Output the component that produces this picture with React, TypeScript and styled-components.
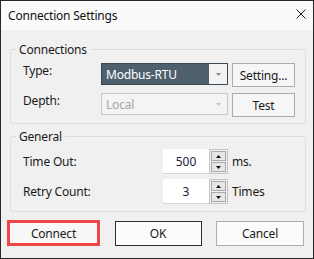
import React from 'react'
import styled, { createGlobalStyle } from 'styled-components'

const GlobalStyle = createGlobalStyle`
  * {
    box-sizing: border-box;
  }
  html, body {
    margin: 0;
    padding: 0;
    overflow: hidden;
    background: #f0f0f0;
  }
  body {
    font-family: 'Noto Sans', 'Segoe UI', sans-serif;
    font-size: 12px;
    color: #1a1a1a;
  }
`

const Window = styled.div`
  width: 314px;
  height: 259px;
  border: 1px solid #262626;
  background: #f0f0f0;
  display: flex;
  flex-direction: column;
`

const TitleBar = styled.div`
  flex: none;
  height: 29px;
  display: flex;
  align-items: center;
  justify-content: space-between;
  padding: 0 7px 0 7px;
  background: #fafafa;
`

const Title = styled.span`
  color: #111;
  letter-spacing: -0.2px;
`

const CloseIcon = styled.svg`
  width: 10px;
  height: 10px;
  margin-bottom: 3px;
`

const Content = styled.div`
  flex: 1;
  padding: 11px 7px 0 9px;
`

const Group = styled.fieldset<{ $pad: string }>`
  margin: 0;
  min-width: 0;
  padding: ${({ $pad }) => $pad};
  border: 1px solid #dcdcdc;
  border-radius: 3px;

  & + & {
    margin-top: 4px;
  }
`

const Legend = styled.legend`
  padding: 0 3px;
  margin-left: -7px;
  line-height: 17px;
  letter-spacing: -0.2px;
`

const ConnectionGrid = styled.div`
  display: grid;
  grid-template-columns: 74px 127px 63px;
  column-gap: 4px;
  row-gap: 6px;
  align-items: start;
`

const GeneralGrid = styled.div`
  display: grid;
  grid-template-columns: 140px auto 1fr;
  row-gap: 5px;
  align-items: center;
`

const Label = styled.span`
  line-height: 16px;
  letter-spacing: -0.2px;
`

const Combo = styled.div<{ $active?: boolean }>`
  height: 22px;
  display: flex;
  border: 1px solid ${({ $active }) => ($active ? '#3b4a55' : '#c9c9c9')};
  background: ${({ $active }) => ($active ? '#f3f3f3' : '#f4f4f4')};
`

const ComboText = styled.div<{ $active?: boolean }>`
  flex: 1;
  display: flex;
  align-items: center;
  padding-left: 4px;
  letter-spacing: -0.2px;
  color: ${({ $active }) => ($active ? '#ffffff' : '#a6a6a6')};
  background: ${({ $active }) => ($active ? '#4f606d' : 'transparent')};
`

const ComboArrow = styled.div`
  width: 18px;
  display: flex;
  align-items: center;
  justify-content: center;
`

const SideButton = styled.button`
  height: 24px;
  padding: 0;
  font: inherit;
  letter-spacing: -0.2px;
  color: #1a1a1a;
  background: #f6f6f6;
  border: 1px solid #adadad;
`

const NumberField = styled.div`
  display: flex;
  height: 25px;
`

const NumberInput = styled.div`
  width: 46px;
  display: flex;
  align-items: center;
  justify-content: center;
  background: #ffffff;
  border-bottom: 1px solid #d6d6d6;
  color: #1c1c3a;
`

const Spin = styled.div`
  width: 19px;
  display: flex;
  flex-direction: column;
  gap: 1px;
  padding: 1px;
  border: 1px solid #c4c4c4;
  background: #f0f0f0;
`

const SpinButton = styled.div`
  flex: 1;
  display: flex;
  align-items: center;
  justify-content: center;
  border: 1px solid #a9a9a9;
  background: #e6e6e6;
`

const Unit = styled.span`
  margin-left: 4px;
  letter-spacing: -0.2px;
`

const Footer = styled.div`
  display: flex;
  align-items: center;
  justify-content: space-between;
  margin: 8px 2px 0 -3px;
`

type Variant = 'plain' | 'default' | 'flagged'

const DialogButton = styled.button<{ $width: number; $variant: Variant }>`
  width: ${({ $width }) => $width}px;
  height: ${({ $variant }) => ($variant === 'flagged' ? 26 : 25)}px;
  padding: 0;
  font: inherit;
  letter-spacing: -0.2px;
  color: #1a1a1a;
  background: ${({ $variant }) => ($variant === 'flagged' ? '#f7f7f7' : '#fbfbfb')};
  border: ${({ $variant }) =>
    $variant === 'flagged' ? '3px solid #ef4747' : $variant === 'default' ? '1px solid #2e2e2e' : '1px solid #adadad'};
`

const Caret = ({ color, up }: { color: string; up?: boolean }) => (
  <svg width="5" height="3" viewBox="0 0 5 3">
    <polygon points={up ? '0,3 5,3 2.5,0' : '0,0 5,0 2.5,3'} fill={color} />
  </svg>
)

const Stepper = ({ value }: { value: string }) => (
  <NumberField>
    <NumberInput>{value}</NumberInput>
    <Spin>
      <SpinButton>
        <Caret color="#111" up />
      </SpinButton>
      <SpinButton>
        <Caret color="#111" />
      </SpinButton>
    </Spin>
  </NumberField>
)

const App = () => (
  <Window>
    <GlobalStyle />
    <TitleBar>
      <Title>Connection Settings</Title>
      <CloseIcon viewBox="0 0 10 10">
        <path d="M0.5 0.5 L9.5 9.5 M9.5 0.5 L0.5 9.5" stroke="#1a1a1a" strokeWidth="1" />
      </CloseIcon>
    </TitleBar>
    <Content>
      <Group $pad="5px 10px 6px 12px">
        <Legend>Connections</Legend>
        <ConnectionGrid>
          <Label>Type:</Label>
          <Combo $active>
            <ComboText $active>Modbus-RTU</ComboText>
            <ComboArrow>
              <Caret color="#8a8a8a" />
            </ComboArrow>
          </Combo>
          <SideButton>Setting...</SideButton>
          <Label>Depth:</Label>
          <Combo>
            <ComboText>Local</ComboText>
            <ComboArrow>
              <Caret color="#c4c4c4" />
            </ComboArrow>
          </Combo>
          <SideButton>Test</SideButton>
        </ConnectionGrid>
      </Group>
      <Group $pad="4px 10px 7px 12px">
        <Legend>General</Legend>
        <GeneralGrid>
          <Label>Time Out:</Label>
          <Stepper value="500" />
          <Unit>ms.</Unit>
          <Label>Retry Count:</Label>
          <Stepper value="3" />
          <Unit>Times</Unit>
        </GeneralGrid>
      </Group>
      <Footer>
        <DialogButton $width={93} $variant="flagged">Connect</DialogButton>
        <DialogButton $width={87} $variant="default">OK</DialogButton>
        <DialogButton $width={88} $variant="plain">Cancel</DialogButton>
      </Footer>
    </Content>
  </Window>
)

export default App
